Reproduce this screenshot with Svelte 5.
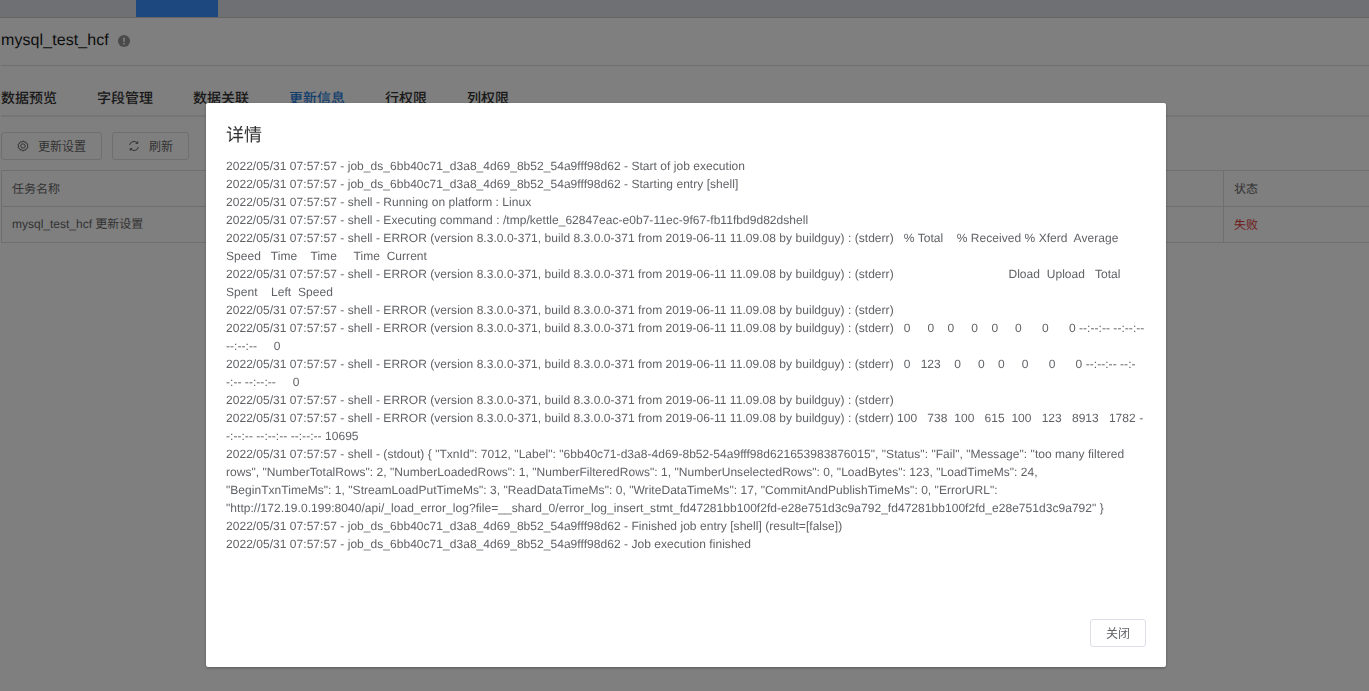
<script>
  const E = '2022/05/31 07:57:57 - shell - ERROR (version 8.3.0.0-371, build 8.3.0.0-371 from 2019-06-11 11.09.08 by buildguy) : (stderr) ';
  const J = '2022/05/31 07:57:57 - job_ds_6bb40c71_d3a8_4d69_8b52_54a9fff98d62 - ';
  const S = '2022/05/31 07:57:57 - shell - ';
  const logs = [
    J + 'Start of job execution',
    J + 'Starting entry [shell]',
    S + 'Running on platform : Linux',
    S + 'Executing command : /tmp/kettle_62847eac-e0b7-11ec-9f67-fb11fbd9d82dshell',
    E + '  % Total    % Received % Xferd  Average Speed   Time    Time     Time  Current',
    E + '                                 Dload  Upload   Total   Spent    Left  Speed',
    E,
    E + '  0     0    0     0    0     0      0      0 --:--:-- --:--:-- --:--:--     0',
    E + '  0   123    0     0    0     0      0      0 --:--:-- --:--:-- --:--:--     0',
    E,
    E + '100   738  100   615  100   123   8913   1782 --:--:-- --:--:-- --:--:-- 10695',
    S + '(stdout) { "TxnId": 7012, "Label": "6bb40c71-d3a8-4d69-8b52-54a9fff98d621653983876015", "Status": "Fail", "Message": "too many filtered rows", "NumberTotalRows": 2, "NumberLoadedRows": 1, "NumberFilteredRows": 1, "NumberUnselectedRows": 0, "LoadBytes": 123, "LoadTimeMs": 24, "BeginTxnTimeMs": 1, "StreamLoadPutTimeMs": 3, "ReadDataTimeMs": 0, "WriteDataTimeMs": 17, "CommitAndPublishTimeMs": 0, "ErrorURL": "http://172.19.0.199:8040/api/_load_error_log?file=__shard_0/error_log_insert_stmt_fd47281bb100f2fd-e28e751d3c9a792_fd47281bb100f2fd_e28e751d3c9a792" }',
    J + 'Finished job entry [shell] (result=[false])',
    J + 'Job execution finished'
  ];
  const tabs = ['数据预览', '字段管理', '数据关联', '更新信息', '行权限', '列权限'];
</script>

<div class="page">
  <div class="topbar"><div class="active-nav"></div></div>
  <div class="title-row">
    <span class="name">mysql_test_hcf</span>
    <svg class="info" viewBox="0 0 12 12" width="12" height="12"><circle cx="6" cy="6" r="6" fill="#949494"/><rect x="5.1" y="2.6" width="1.8" height="4.4" rx="0.7" fill="#f4f4f4"/><circle cx="6" cy="8.8" r="1" fill="#f4f4f4"/></svg>
  </div>
  <div class="tabs">
    {#each tabs as t, i}
      <span class="tab" class:on={i === 3}>{t}</span>
    {/each}
  </div>
  <div class="actions">
    <button class="btn wide">
      <svg viewBox="0 0 12 12" width="12" height="12" fill="none" stroke="#666" stroke-width="1"><path d="M6 .8l1.1 1.3 1.7-.2.5 1.6 1.6.7-.4 1.8.4 1.8-1.6.7-.5 1.6-1.7-.2L6 11.2 4.9 9.9l-1.7.2-.5-1.6-1.6-.7.4-1.8-.4-1.8 1.6-.7.5-1.6 1.7.2z"/><circle cx="6" cy="6" r="2.2"/></svg>
      <span>更新设置</span>
    </button>
    <button class="btn">
      <svg viewBox="0 0 12 12" width="12" height="12" fill="none" stroke="#666" stroke-width="1"><path d="M1.6 5A4.5 4.5 0 0 1 9.4 3M10.4 7A4.5 4.5 0 0 1 2.6 9"/><path d="M9.8 1.2v2.2H7.6M2.2 10.8V8.6h2.2"/></svg>
      <span>刷新</span>
    </button>
  </div>
  <div class="table">
    <div class="tr head"><div class="td grow">任务名称</div><div class="td status">状态</div></div>
    <div class="tr"><div class="td grow latin">mysql_test_hcf 更新设置</div><div class="td status fail">失败</div></div>
  </div>
</div>

<div class="overlay">
  <div class="dialog">
    <div class="dialog-title">详情</div>
    <div class="log">
      {#each logs as l}
        <div>{l}</div>
      {/each}
    </div>
    <div class="footer"><button class="close"><span>关闭</span></button></div>
  </div>
</div>

<style>
  :global(body) {
    margin: 0;
    font-family: "Liberation Sans", "Noto Sans CJK SC", sans-serif;
    background: #fff;
    overflow: hidden;
    text-rendering: geometricPrecision;
  }
  .page { height: 691px; box-sizing: border-box; }
  .topbar { height: 17px; background: #dfe1e6; border-bottom: 1px solid #ccc; }
  .active-nav { margin-left: 136px; width: 82px; height: 17px; background: #3a91ff; }
  .title-row {
    margin-left: 1px; height: 47px; box-sizing: content-box; display: flex; align-items: center; gap: 9px;
    border-bottom: 1px solid #dcdee2;
  }
  .name { font-size: 16px; line-height: 45px; height: 45px; margin-bottom: 2px; color: #1a1a1a; letter-spacing: 0.08px; }
  .info { margin-bottom: 2px; }
  .tabs {
    margin: 0 0 0 1px; height: 51px; box-sizing: border-box; padding-top: 22px;
    display: flex; gap: 40px; border-bottom: 2px solid #e8eaec;
  }
  .tab { font-size: 14px; line-height: 20px; color: #333; font-weight: 500; }
  .tab.on { color: #2d7fdc; }
  .actions { margin: 15px 0 0 1px; display: flex; gap: 10px; }
  .btn {
    height: 28px; width: 77px; padding: 0 0 0 15px; box-sizing: border-box; border: 1px solid #dcdee2; border-radius: 3px;
    background: #fff; color: #666; font: 12px "Liberation Sans", "Noto Sans CJK SC", sans-serif;
    display: flex; align-items: center; gap: 9px;
  }
  .btn span { position: relative; top: -1px; }
  .btn.wide { width: 101px; }
  .table { margin: 10px 0 0 1px; border-top: 1px solid #dcdee2; }
  .tr { display: flex; height: 36px; border-bottom: 1px solid #dcdee2; box-sizing: border-box; }
  .td { font-size: 12px; line-height: 36px; padding-left: 10px; color: #666; box-sizing: border-box; }
  .td.latin { line-height: 34px; }
  .grow { flex: 1; border-left: 1px solid #dcdee2; }
  .status { width: 146px; border-left: 1px solid #dcdee2; padding-left: 10px; }
  .fail { color: #e0393e; }

  .overlay { position: fixed; inset: 0; background: rgba(0, 0, 0, 0.5); }
  .dialog {
    position: absolute; left: 206px; top: 103px; width: 960px; height: 564px; box-sizing: border-box;
    background: #fff; border-radius: 2px; box-shadow: 0 1px 3px rgba(0, 0, 0, 0.3);
    padding: 20px; display: flex; flex-direction: column;
  }
  .dialog-title { font-size: 18px; line-height: 24px; color: #303133; }
  .log { margin-top: 10px; flex: 1; font-size: 12px; line-height: 18px; color: #606266; white-space: pre-wrap; letter-spacing: 0.041px; }
  .footer { display: flex; justify-content: flex-end; }
  .close {
    width: 56px; height: 28px; padding: 0; border: 1px solid #dcdfe6; border-radius: 3px; background: #fff;
    color: #606266; font: 12px "Liberation Sans", "Noto Sans CJK SC", sans-serif;
  }
  .close span { position: relative; top: -1px; }
</style>
